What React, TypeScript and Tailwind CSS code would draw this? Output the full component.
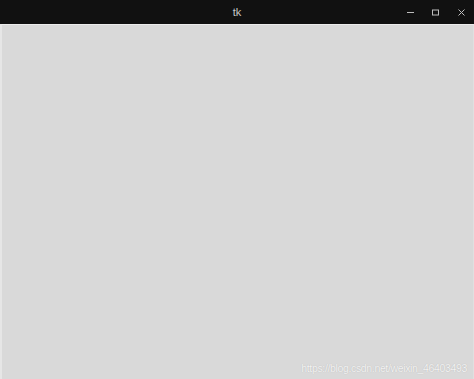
export default function App() {
  return (
    <div className="w-[474px] h-[379px] flex flex-col bg-[#111111] font-['Segoe_UI','Liberation_Sans',sans-serif] overflow-hidden">
      {/* title bar */}
      <div className="h-[24px] flex items-center relative shrink-0">
        <div className="flex-1 text-center text-[11px] text-[#c8c8c8] leading-none">tk</div>
        <div className="absolute right-0 top-0 h-[24px] flex items-center">
          <div className="w-[25px] h-[24px] flex items-center justify-center">
            <svg width="9" height="9" viewBox="0 0 9 9">
              <path d="M1 4.5H8" stroke="#bdbdbd" strokeWidth="1" />
            </svg>
          </div>
          <div className="w-[25px] h-[24px] flex items-center justify-center">
            <svg width="9" height="9" viewBox="0 0 9 9">
              <rect x="1.5" y="2" width="6" height="5" fill="none" stroke="#bdbdbd" strokeWidth="1" />
            </svg>
          </div>
          <div className="w-[26px] h-[24px] flex items-center justify-center">
            <svg width="9" height="9" viewBox="0 0 9 9">
              <path d="M1.5 1.5L7.5 7.5M7.5 1.5L1.5 7.5" stroke="#bdbdbd" strokeWidth="1" />
            </svg>
          </div>
        </div>
      </div>
      {/* client area */}
      <div className="flex-1 bg-[#d9d9d9] border-t border-t-[#ececec] border-l-2 border-l-[#e6e6e6] border-r border-r-[#e0e0e0] flex flex-col justify-end items-end pr-[6px] pb-[6px]">
        <span className="text-[10.5px] tracking-[-0.35px] leading-none text-[#f2f2f2] [text-shadow:0_0_1px_rgba(0,0,0,0.2)] font-['Liberation_Sans',sans-serif]">
          https://blog.csdn.net/weixin_46403493
        </span>
      </div>
    </div>
  );
}
